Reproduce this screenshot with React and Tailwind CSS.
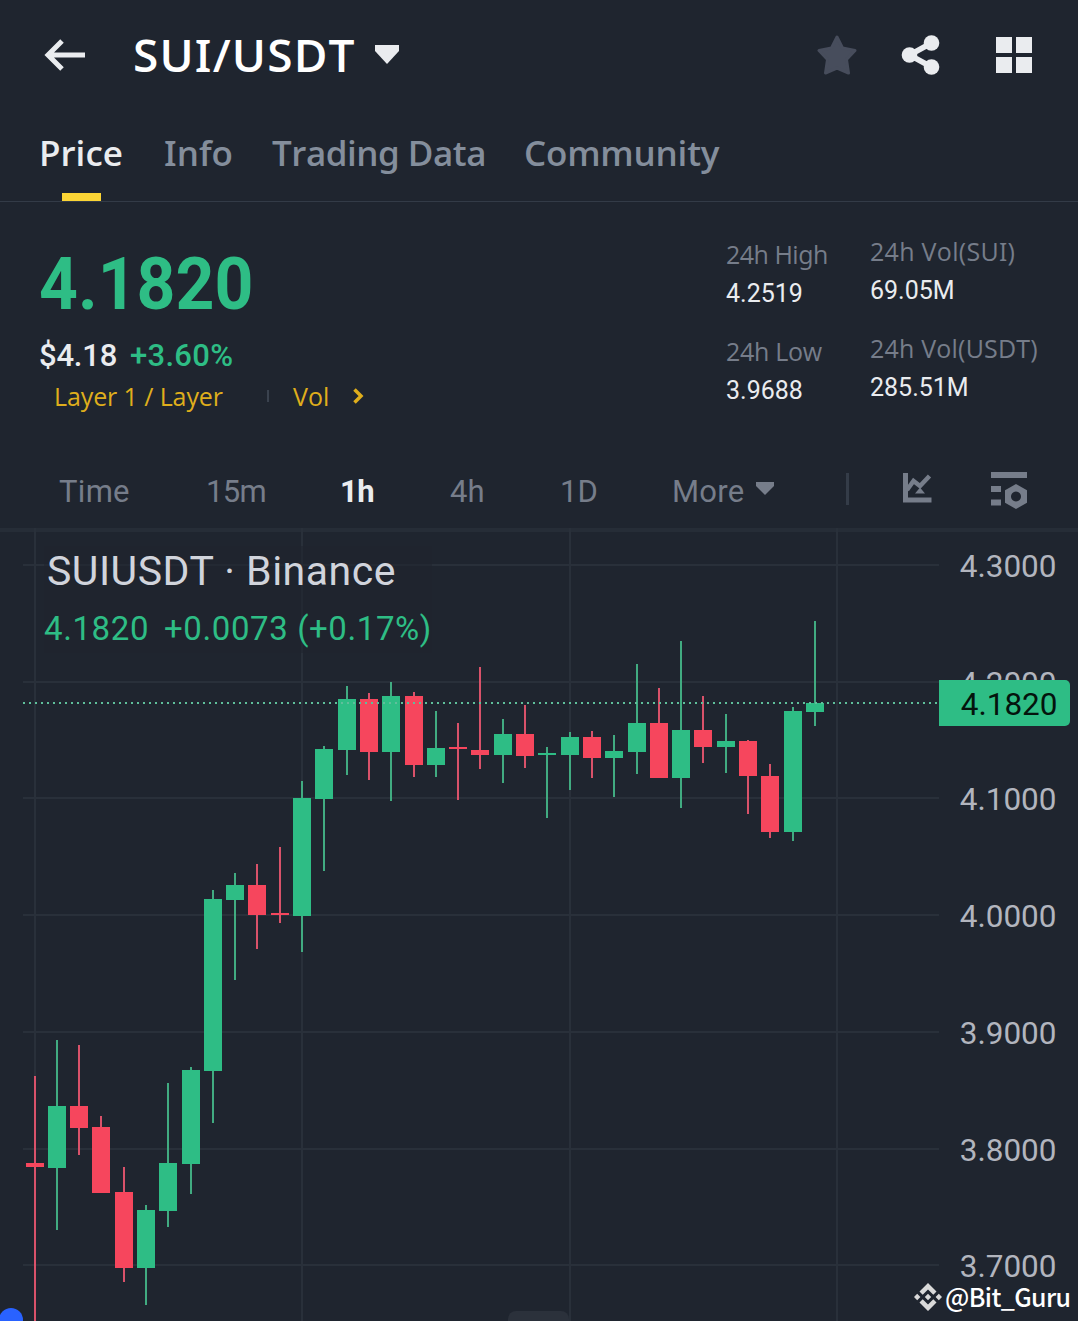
import React, { useState } from "react";

// [x, high, body top, body bottom, low, up]
const candles = [
  [35, 1076, 1163, 1167, 1330, 0],
  [57, 1040, 1106, 1168, 1230, 1],
  [79, 1045, 1106, 1128, 1155, 0],
  [101, 1116, 1127, 1193, 1193, 0],
  [124, 1167, 1192, 1268, 1282, 0],
  [146, 1205, 1210, 1268, 1305, 1],
  [168, 1083, 1163, 1211, 1227, 1],
  [191, 1067, 1070, 1164, 1194, 1],
  [213, 890, 899, 1071, 1123, 1],
  [235, 873, 885, 900, 980, 1],
  [257, 864, 885, 915, 949, 0],
  [280, 847, 913, 915, 923, 0],
  [302, 781, 798, 916, 952, 1],
  [324, 746, 749, 799, 871, 1],
  [347, 686, 699, 750, 775, 1],
  [369, 693, 699, 752, 780, 0],
  [391, 682, 696, 752, 801, 1],
  [414, 692, 696, 765, 777, 0],
  [436, 711, 748, 765, 777, 1],
  [458, 723, 747, 749, 800, 0],
  [480, 667, 750, 755, 769, 0],
  [503, 719, 734, 755, 783, 1],
  [525, 705, 734, 756, 768, 0],
  [547, 747, 753, 755, 818, 1],
  [570, 732, 737, 755, 790, 1],
  [592, 731, 737, 758, 778, 0],
  [614, 735, 751, 758, 797, 1],
  [637, 664, 723, 752, 774, 1],
  [659, 688, 723, 778, 778, 0],
  [681, 641, 730, 778, 808, 1],
  [703, 696, 730, 747, 763, 0],
  [726, 714, 741, 747, 773, 1],
  [748, 740, 741, 776, 814, 0],
  [770, 764, 776, 832, 838, 0],
  [793, 707, 711, 832, 841, 1],
  [815, 621, 703, 712, 726, 1],
];

const priceLevels = [
  ["4.3000", 565],
  ["4.2000", 682],
  ["4.1000", 798],
  ["4.0000", 915],
  ["3.9000", 1032],
  ["3.8000", 1149],
  ["3.7000", 1265],
];

const timeLines = [35, 302, 570, 837];

const tabs = [
  { name: "Price", style: "w-[125px]" },
  { name: "Info", style: "w-[108px]" },
  { name: "Trading Data", style: "w-[252px] tracking-[-0.5px]" },
  { name: "Community", style: "w-[200px] tracking-[-0.2px]" },
];

const intervals = [
  { name: "Time", style: "w-[147px] tracking-[0.3px]" },
  { name: "15m", style: "w-[134px] tracking-[-0.7px]" },
  { name: "1h", style: "w-[110px] tracking-[-0.5px]" },
  { name: "4h", style: "w-[110px]" },
  { name: "1D", style: "w-[112px]" },
];

const stats = [
  [
    { label: "24h High", value: "4.2519", style: "tracking-[-0.5px]" },
    { label: "24h Low", value: "3.9688", style: "tracking-[-0.3px]" },
  ],
  [
    { label: "24h Vol(SUI)", value: "69.05M", style: "tracking-[0.3px]" },
    { label: "24h Vol(USDT)", value: "285.51M", style: "tracking-[0.2px]" },
  ],
];

function Header() {
  return (
    <header className="flex h-[109px] items-center pl-11 pr-[46px]">
      <svg width="42" height="32" viewBox="0 0 42 32" fill="none" stroke="#eaecef" strokeWidth="5">
        <path d="M41 16H4M18 2L4 16L18 30" />
      </svg>
      <h1 className="-mt-[1px] ml-[47px] w-[223px] whitespace-nowrap text-[46px] font-semibold leading-none tracking-[1.2px] text-white [font-feature-settings:'ss01']">
        SUI/USDT
      </h1>
      <svg className="-mt-[1px] ml-[19px]" width="24" height="19" viewBox="0 0 24 19" fill="#eaecef">
        <path d="M0 0h24v6L12 19L0 6z" />
      </svg>

      <div className="ml-auto flex items-center">
        <svg width="40" height="40" viewBox="0 0 40 40" fill="#474d5c" stroke="#474d5c" strokeWidth="3" strokeLinejoin="round">
          <path d="M20 2L25.500 13L38 15.500L29.500 24.500L31.500 38L20 33L8.500 38L10.500 24.500L2 15.500L14.500 13z" />
        </svg>
        <svg className="ml-11" width="40" height="40" viewBox="0 0 40 40" fill="#eaecef">
          <path d="M30.500 8L8.500 20L30.500 32" fill="none" stroke="#eaecef" strokeWidth="5.500" />
          <circle cx="30.500" cy="8" r="7.800" />
          <circle cx="8.500" cy="20" r="7.800" />
          <circle cx="30.500" cy="32" r="7.800" />
        </svg>
        <div className="ml-[55px] grid grid-cols-2 gap-1">
          <span className="size-4 bg-[#eaecef]" />
          <span className="size-4 bg-[#eaecef]" />
          <span className="size-4 bg-[#eaecef]" />
          <span className="size-4 bg-[#eaecef]" />
        </div>
      </div>
    </header>
  );
}

function Tabs({ active, onChange }) {
  return (
    <nav className="flex h-[93px] border-b border-[#333b47] pl-[39px]">
      {tabs.map((t) => (
        <button
          key={t.name}
          onClick={() => onChange(t.name)}
          className={`flex flex-col items-start whitespace-nowrap pt-[19px] text-left text-[35px] font-semibold leading-[50px] [font-feature-settings:'ss01'] ${t.style} ${
            active === t.name ? "text-[#eaecef]" : "text-[#848e9c]"
          }`}
        >
          {t.name}
          {active === t.name && (
            <span className="ml-[23px] mt-[15px] h-2 w-[39px] bg-[#fcd535]" />
          )}
        </button>
      ))}
    </nav>
  );
}

function Summary() {
  return (
    <section className="flex h-[253px] pl-[39px]">
      <div className="w-[687px] whitespace-nowrap">
        <p className="mt-[46px] w-[230px] origin-left scale-x-[0.93] text-[73px] font-bold leading-[72px] text-[#2ebd85] font-[Roboto]">
          4.1820
        </p>
        <p className="mt-[18px] flex text-[31px] font-medium leading-9 font-[Roboto]">
          <span className="w-[91px] tracking-[-0.2px] text-[#eaecef]">$4.18</span>
          <span className="tracking-[0.3px] text-[#2ebd85]">+3.60%</span>
        </p>
        <div className="ml-[15px] mt-1 flex items-center text-[25px] leading-9 text-[#dfae1c]">
          <span className="w-[213px] tracking-[-0.1px]">Layer 1 / Layer</span>
          <span className="h-3 w-[2px] bg-[#3a424e]" />
          <span className="ml-6 w-[60px]">Vol</span>
          <svg width="11" height="16" viewBox="0 0 11 16" fill="none" stroke="#dfae1c" strokeWidth="3.500">
            <path d="M1.500 1.500L8 8L1.500 14.500" />
          </svg>
        </div>
      </div>

      {stats.map((col, i) => (
        <dl
          key={i}
          className={i === 0 ? "w-[144px] whitespace-nowrap pt-[33px]" : "whitespace-nowrap pt-[30px]"}
        >
          {col.map((s) => (
            <div key={s.label} className="mb-[19px]">
              <dt
                className={`text-[25px] leading-[38px] text-[#767d8a] [font-feature-settings:'ss01'] ${s.style}`}
              >
                {s.label}
              </dt>
              <dd className="mt-[2px] text-[25px] leading-[38px] text-[#eaecef] font-[Roboto]">{s.value}</dd>
            </div>
          ))}
        </dl>
      ))}
    </section>
  );
}

function Intervals({ active, onChange }) {
  return (
    <div className="flex h-[73px] items-center pl-[59px] text-[31px] text-[#767d8a] font-[Roboto]">
      {intervals.map((t) => (
        <button
          key={t.name}
          onClick={() => onChange(t.name)}
          className={`mt-[2px] whitespace-nowrap text-left ${t.style} ${
            active === t.name ? "font-bold text-[#eaecef]" : ""
          }`}
        >
          {t.name}
        </button>
      ))}
      <span className="mt-[2px] w-[84px] tracking-[0.3px]">More</span>
      <svg className="-mt-[6px]" width="18" height="13" viewBox="0 0 18 13" fill="#767d8a">
        <path d="M0 0h18v4L9 13L0 4z" />
      </svg>
      <span className="-mt-[5px] ml-[72px] h-8 w-[3px] bg-[#343c48]" />
      <svg className="-mt-[7px] ml-[54px]" width="29" height="30" viewBox="0 0 29 30" fill="none" stroke="#767d8a">
        <path d="M2.500 0V27H28.500" strokeWidth="5" />
        <path d="M4 17L10.500 8L17 13L26.500 3" strokeWidth="4.500" />
        <path d="M17 14.500L22 20.500H12z" fill="#767d8a" stroke="none" />
      </svg>
      <svg className="-mt-[3px] ml-[59px]" width="36" height="37" viewBox="0 0 36 37" fill="#767d8a">
        <path d="M0 0h36v6H0zM0 14h10v6H0zM0 27.500h10v6H0z" />
        <path fillRule="evenodd" d="M25 12L36 18.200V30.800L25 37L14 30.800V18.200zM25 19.500a5 5 0 1 0 .01 0z" />
      </svg>
    </div>
  );
}

function Chart() {
  return (
    <section className="relative h-[793px] overflow-hidden">
      <svg className="block" width="1078" height="793" viewBox="0 528 1078 793">
        <rect x="0" y="528" width="1078" height="4" fill="#262d37" />
        {timeLines.map((x) => (
          <rect key={x} x={x - 1} y="528" width="2" height="793" fill="#29303a" />
        ))}
        {priceLevels.map(([label, y]) => (
          <g key={label}>
            <rect x="23" y={y - 1} width="916" height="2" fill="#29303a" />
            <text x="1056.500" y={y + 12} textAnchor="end" fontSize="31.500" fill="#b2b5be" className="font-[Roboto]">
              {label}
            </text>
          </g>
        ))}

        {candles.map(([x, high, top, bottom, low, up]) => (
          <g key={x}>
            <rect x={x - 1} y={high} width="2" height={low - high} fill={up ? "#41ab81" : "#d9526a"} />
            <rect x={x - 9} y={top} width="18" height={bottom - top} fill={up ? "#2ebd85" : "#f6465d"} />
          </g>
        ))}

        {/* last price */}
        <path d="M23 703H939" stroke="#5fbf9b" strokeWidth="2" strokeDasharray="2 4" />
        <path d="M939 680h126a5 5 0 0 1 5 5v36a5 5 0 0 1-5 5h-126z" fill="#2ebd85" />
        <text x="1057.500" y="715" textAnchor="end" fontSize="31.500" fill="#04140d" className="font-[Roboto]">
          4.1820
        </text>

        <circle cx="11" cy="1320" r="12" fill="#2962ff" />
        <rect x="508" y="1311" width="61" height="20" rx="8" fill="#2b313b" />
      </svg>

      <div className="absolute left-[44px] top-[18px] whitespace-nowrap bg-[#1f252f]/60 font-[Roboto]">
        <p className="pl-[3px] text-[41px] leading-[50px] tracking-[0.5px] text-[#d1d4dc]">SUIUSDT · Binance</p>
        <p className="mt-[9px] flex text-[33px] leading-[48px] tracking-[0.6px] text-[#2ebd85]">
          <span className="w-[120px]">4.1820</span>
          <span>+0.0073 (+0.17%)</span>
        </p>
      </div>

      <div className="absolute bottom-[10px] right-[8px] flex items-center text-white">
        <svg width="28" height="28" viewBox="0 0 28 28" fill="#d9d9d9">
          <path d="M14 0L22.500 8.500L19.300 11.700L14 6.400L8.700 11.700L5.500 8.500z" />
          <path d="M14 28L22.500 19.500L19.300 16.300L14 21.600L8.700 16.300L5.500 19.500z" />
          <path d="M14 10.800L17.200 14L14 17.200L10.800 14zM3.200 10.800L6.400 14L3.200 17.200L0 14zM24.800 10.800L28 14L24.800 17.200L21.600 14z" />
        </svg>
        <span className="-mt-[2px] ml-[3px] w-[125px] whitespace-nowrap text-[25px] font-medium leading-6 tracking-[-0.6px] font-['Noto_Sans_CJK_SC']">
          @Bit_Guru
        </span>
      </div>
    </section>
  );
}

export default function App() {
  const [tab, setTab] = useState("Price");
  const [interval, setInterval] = useState("1h");

  return (
    <div className="h-[1321px] w-[1078px] overflow-hidden bg-[#1f252f] font-['Open_Sans']">
      <Header />
      <Tabs active={tab} onChange={setTab} />
      <Summary />
      <Intervals active={interval} onChange={setInterval} />
      <Chart />
    </div>
  );
}
